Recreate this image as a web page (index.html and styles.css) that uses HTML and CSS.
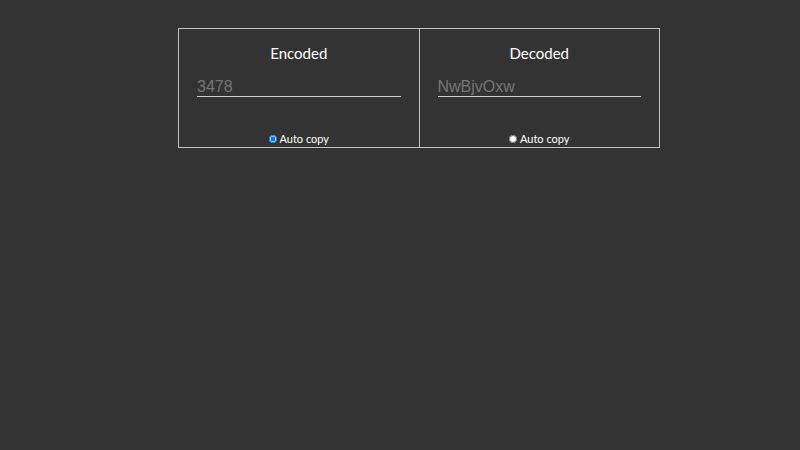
FILE: index.html
```html
<!DOCTYPE html>
<html lang="en">
<head>
    <meta charset="UTF-8">
    <meta name="viewport" content="width=device-width, initial-scale=1.0">
    <title>Encoder</title>
    <link rel="stylesheet" href="styles.css">
</head>
<body>
    <div class="converter">
        <!-- Encoded side -->
        <div class="panel">
            <h2>Encoded</h2>
            <input type="text" class="field" placeholder="3478">
            <label class="copy">
                <input type="radio" name="autocopy" checked>
                Auto copy
            </label>
        </div>

        <!-- Decoded side -->
        <div class="panel">
            <h2>Decoded</h2>
            <input type="text" class="field" placeholder="NwBjvOxw">
            <label class="copy">
                <input type="radio" name="autocopy">
                Auto copy
            </label>
        </div>
    </div>
</body>
</html>
```

FILE: styles.css
```css
* {
    box-sizing: border-box;
    margin: 0;
    padding: 0;
}

body {
    background: #333333;
    font-family: 'Lato', sans-serif;
    color: #fff;
}

.converter {
    display: flex;
    width: 482px;
    margin: 28px 0 0 178px;
}

.panel {
    flex: 1;
    height: 120px;
    border: 1px solid #c4c4c4;
    display: flex;
    flex-direction: column;
    align-items: center;
    padding: 14px 18px 1px;
}

.panel + .panel {
    margin-left: -1px;
}

h2 {
    font-size: 15px;
    font-weight: 400;
    line-height: 20px;
}

.field {
    width: 100%;
    height: 21px;
    margin-top: 13px;
    padding-top: 2px;
    background: transparent;
    border: none;
    border-bottom: 1px solid #cfcfcf;
    font-family: 'Liberation Sans', Arial, sans-serif;
    font-size: 16px;
    color: #ddd;
    outline: none;
}

.field::placeholder {
    color: #767676;
}

.copy {
    margin-top: auto;
    font-size: 11px;
    line-height: 14px;
    display: flex;
    align-items: center;
    gap: 3px;
}

.copy input {
    width: 8px;
    height: 8px;
    margin: 0;
}
```
